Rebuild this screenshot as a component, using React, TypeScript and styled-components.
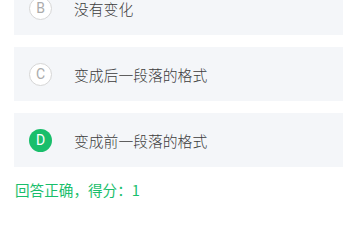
import React from "react";
import styled, { createGlobalStyle } from "styled-components";

const Global = createGlobalStyle`
  html, body { margin: 0; padding: 0; background: #ffffff; }
  body { font-family: Roboto, "Noto Sans CJK SC", sans-serif; overflow: hidden; }
`;

const Page = styled.div`
  width: 357px;
  height: 200px;
  overflow: hidden;
  padding: 0 14px;
  box-sizing: border-box;
`;

const List = styled.div`
  display: flex;
  flex-direction: column;
  gap: 12px;
  margin-top: -19px;
`;

const Option = styled.div`
  display: flex;
  align-items: center;
  height: 54px;
  background: #f4f6f9;
  padding-left: 15px;
  box-sizing: border-box;
`;

const Badge = styled.div<{ $active?: boolean }>`
  width: 23px;
  height: 23px;
  border-radius: 50%;
  box-sizing: border-box;
  display: flex;
  align-items: center;
  justify-content: center;
  font-family: Roboto, sans-serif;
  font-size: 14px;
  flex-shrink: 0;
  margin-right: 22px;
  color: ${(p) => (p.$active ? "#ffffff" : "#ababab")};
  background: ${(p) => (p.$active ? "#19be6b" : "#ffffff")};
  border: ${(p) => (p.$active ? "none" : "1px solid #d6d6d6")};
`;

const Label = styled.span`
  font-family: "Noto Sans CJK SC", sans-serif;
  font-size: 14.8px;
  font-weight: 300;
  color: #3c3c3c;
`;

const Result = styled.div`
  margin-top: 13px;
  padding-left: 1px;
  font-family: "Noto Sans CJK SC", sans-serif;
  font-size: 14.6px;
  line-height: 20px;
  color: #19be6b;
`;

const options = [
  { key: "B", text: "没有变化", active: false },
  { key: "C", text: "变成后一段落的格式", active: false },
  { key: "D", text: "变成前一段落的格式", active: true },
];

export default function App() {
  return (
    <>
      <Global />
      <Page>
        <List>
          {options.map((o) => (
            <Option key={o.key}>
              <Badge $active={o.active}>{o.key}</Badge>
              <Label>{o.text}</Label>
            </Option>
          ))}
        </List>
        <Result>回答正确，得分：1</Result>
      </Page>
    </>
  );
}
